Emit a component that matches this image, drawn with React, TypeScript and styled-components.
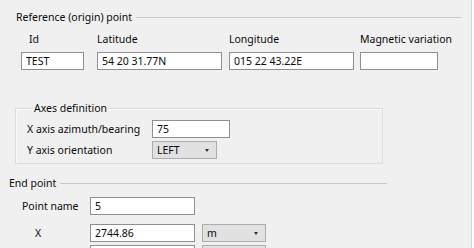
import styled, { createGlobalStyle } from "styled-components";

const GlobalStyle = createGlobalStyle`
  html, body {
    margin: 0;
    padding: 0;
    background: #ffffff;
  }
  * {
    box-sizing: border-box;
  }
`;

const Window = styled.div`
  width: 474px;
  height: 248px;
  overflow: hidden;
  display: flex;
  background: #ffffff;
`;

const Panel = styled.div`
  width: 472px;
  height: 248px;
  background: #f0f0f0;
  border-right: 1px solid #d4d4d4;
  font-family: "Noto Sans", "Open Sans", sans-serif;
  font-size: 10.5px;
  color: #0a0a0a;
`;

const Section = styled.div<{ $top: number; $left: number; $right: number }>`
  padding: ${(p) => p.$top}px ${(p) => p.$right}px 0 ${(p) => p.$left}px;
`;

const Heading = styled.div`
  display: flex;
  align-items: center;
  gap: 4px;
  height: 14px;
  line-height: 14px;
  white-space: nowrap;
  &::after {
    content: "";
    flex: 1;
    border-top: 1px solid #c9c9c9;
  }
`;

const OriginGrid = styled.div`
  display: grid;
  grid-template-columns: 76px 132px 131px 78px;
  padding: 8px 0 0 5px;
`;

const ColLabel = styled.div<{ $indent?: number }>`
  height: 14px;
  line-height: 14px;
  padding-left: ${(p) => p.$indent ?? 0}px;
  margin-bottom: 6px;
  white-space: nowrap;
`;

const Field = styled.div<{ $w: number }>`
  width: ${(p) => p.$w}px;
  height: 18px;
  background: #ffffff;
  border: 1px solid #8f8f8f;
  padding: 0 4px;
  line-height: 16px;
  white-space: nowrap;
  overflow: hidden;
`;

const Combo = styled.div<{ $w: number }>`
  width: ${(p) => p.$w}px;
  height: 18px;
  background: #e1e1e1;
  border: 1px solid #adadad;
  padding: 0 7px 0 4px;
  line-height: 16px;
  display: flex;
  align-items: center;
  justify-content: space-between;
`;

const Caret = styled.span`
  width: 0;
  height: 0;
  border-left: 2.5px solid transparent;
  border-right: 2.5px solid transparent;
  border-top: 3px solid #333;
`;

const GroupBox = styled.fieldset`
  margin: 31px 0 0 15px;
  width: 368px;
  height: 63px;
  border: 1px solid #dcdcdc;
  box-shadow: inset 1px 1px 0 #fafafa;
  padding: 5px 0 0 11px;
  legend {
    padding: 0 1px;
    margin-left: 6px;
    line-height: 14px;
  }
`;

const FormRow = styled.div<{ $label: number; $gap?: number }>`
  display: grid;
  grid-template-columns: ${(p) => p.$label}px auto auto;
  justify-content: start;
  column-gap: 7px;
  align-items: center;
  margin-bottom: ${(p) => p.$gap ?? 3}px;
`;

const RowLabel = styled.div<{ $indent?: number }>`
  padding-left: ${(p) => p.$indent ?? 0}px;
  line-height: 14px;
  white-space: nowrap;
`;

const EndGrid = styled.div`
  padding: 7px 0 0 13px;
`;

const Arrow = () => <Caret />;

export default function App() {
  return (
    <>
      <GlobalStyle />
      <Window>
        <Panel>
          <Section $top={10} $left={16} $right={9}>
            <Heading>Reference (origin) point</Heading>
            <OriginGrid>
              <div>
                <ColLabel $indent={8}>Id</ColLabel>
                <Field $w={63}>TEST</Field>
              </div>
              <div>
                <ColLabel>Latitude</ColLabel>
                <Field $w={125}>54 20 31.77N</Field>
              </div>
              <div>
                <ColLabel>Longitude</ColLabel>
                <Field $w={125}>015 22 43.22E</Field>
              </div>
              <div>
                <ColLabel>Magnetic variation</ColLabel>
                <Field $w={78}></Field>
              </div>
            </OriginGrid>
          </Section>

          <GroupBox>
            <legend>Axes definition</legend>
            <FormRow $label={118}>
              <RowLabel>X axis azimuth/bearing</RowLabel>
              <Field $w={78}>75</Field>
            </FormRow>
            <FormRow $label={118}>
              <RowLabel>Y axis orientation</RowLabel>
              <Combo $w={65}>
                LEFT
                <Arrow />
              </Combo>
            </FormRow>
          </GroupBox>

          <Section $top={12} $left={9} $right={84}>
            <Heading>End point</Heading>
            <EndGrid>
              <FormRow $label={61} $gap={9}>
                <RowLabel>Point name</RowLabel>
                <Field $w={105}>5</Field>
              </FormRow>
              <FormRow $label={61} $gap={3}>
                <RowLabel $indent={13}>X</RowLabel>
                <Field $w={105}>2744.86</Field>
                <Combo $w={64}>
                  m
                  <Arrow />
                </Combo>
              </FormRow>
              <FormRow $label={61}>
                <RowLabel />
                <Field $w={105}></Field>
                <Combo $w={64} />
              </FormRow>
            </EndGrid>
          </Section>
        </Panel>
      </Window>
    </>
  );
}
